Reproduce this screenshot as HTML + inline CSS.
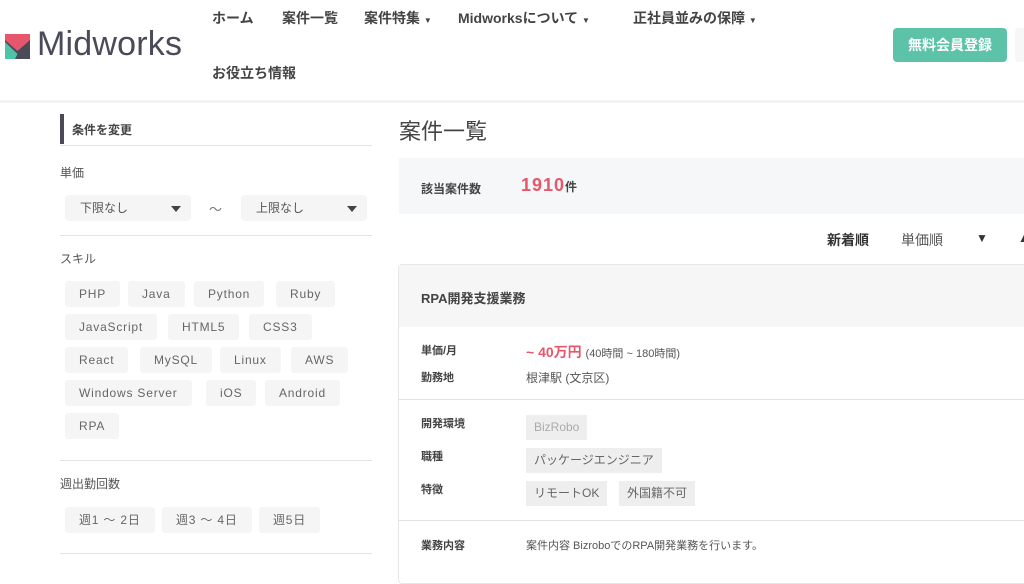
<!DOCTYPE html>
<html><head><meta charset="utf-8"><style>
*{margin:0;padding:0;box-sizing:border-box}
body{width:1024px;height:567px;overflow:hidden;background:#fff;font-family:"Liberation Sans","Noto Sans CJK JP",sans-serif;color:#333;position:relative}
.a{position:absolute;white-space:nowrap}
.nav{font-size:14px;font-weight:bold;color:#444}
.tag{position:absolute;background:#f5f5f5;border-radius:3px;font-size:12px;color:#666;height:26px;line-height:26px;padding:0 14px;letter-spacing:.8px}
.sel{position:absolute;background:#f5f5f5;border-radius:4px;height:26px;font-size:12px;color:#555;line-height:26px;padding-left:15px}
.sel:after{content:"";position:absolute;right:10px;top:11px;border:5px solid transparent;border-top:6px solid #444}
.lbl{font-size:12px;color:#555}
.hr{position:absolute;height:1px;background:#e3e3e3}
.ct{position:absolute;background:#eee;font-size:12px;color:#666;height:25px;line-height:25px;padding:0 8px}
</style></head><body>
<svg class="a" style="left:5px;top:34px" width="25" height="25" viewBox="0 0 25 25">
<rect x="0" y="5" width="25" height="20" fill="#4a4a58"/>
<polygon points="0,8 12.5,20 10,25 0,25" fill="#4cc4a5"/>
<polygon points="0,0 25,0 25,6 12.5,17 0,6" fill="#e8566b"/>
</svg>
<div class="a" style="left:37px;top:25px;font-size:34px;color:#4a4a58;letter-spacing:.2px">Midworks</div>
<div class="a nav" style="left:212px;top:8px">ホーム</div>
<div class="a nav" style="left:282px;top:8px">案件一覧</div>
<div class="a nav" style="left:364px;top:8px">案件特集 <span style="font-size:8px">▼</span></div>
<div class="a nav" style="left:458px;top:8px">Midworksについて <span style="font-size:8px">▼</span></div>
<div class="a nav" style="left:633px;top:8px">正社員並みの保障 <span style="font-size:8px">▼</span></div>
<div class="a nav" style="left:212px;top:63px">お役立ち情報</div>
<div class="a" style="left:893px;top:28px;width:114px;height:34px;background:#5cc3a8;border-radius:4px;color:#fff;font-size:14px;font-weight:bold;text-align:center;line-height:34px">無料会員登録</div>
<div class="a" style="left:1015px;top:28px;width:20px;height:34px;background:#f7f7f7;border-radius:4px"></div>
<div class="a" style="left:0;top:100px;width:1024px;height:3px;background:#f3f3f3"></div>

<div class="a" style="left:60px;top:114px;width:4px;height:30px;background:#4a4a58"></div>
<div class="a" style="left:72px;top:121px;font-size:12px;font-weight:bold;color:#444">条件を変更</div>
<div class="hr" style="left:60px;top:145px;width:312px"></div>
<div class="a lbl" style="left:60px;top:164px">単価</div>
<div class="sel" style="left:65px;top:195px;width:126px">下限なし</div>
<div class="a" style="left:209px;top:199px;font-size:13px;color:#777">～</div>
<div class="sel" style="left:241px;top:195px;width:126px">上限なし</div>
<div class="hr" style="left:60px;top:235px;width:312px"></div>
<div class="a lbl" style="left:60px;top:250px">スキル</div>
<div class="tag" style="left:65px;top:281px">PHP</div>
<div class="tag" style="left:128px;top:281px">Java</div>
<div class="tag" style="left:194px;top:281px">Python</div>
<div class="tag" style="left:276px;top:281px">Ruby</div>
<div class="tag" style="left:65px;top:314px">JavaScript</div>
<div class="tag" style="left:168px;top:314px">HTML5</div>
<div class="tag" style="left:249px;top:314px">CSS3</div>
<div class="tag" style="left:65px;top:347px">React</div>
<div class="tag" style="left:140px;top:347px">MySQL</div>
<div class="tag" style="left:220px;top:347px">Linux</div>
<div class="tag" style="left:291px;top:347px">AWS</div>
<div class="tag" style="left:65px;top:380px">Windows Server</div>
<div class="tag" style="left:206px;top:380px">iOS</div>
<div class="tag" style="left:265px;top:380px">Android</div>
<div class="tag" style="left:65px;top:413px">RPA</div>
<div class="hr" style="left:60px;top:460px;width:312px"></div>
<div class="a lbl" style="left:60px;top:475px">週出勤回数</div>
<div class="tag" style="left:65px;top:507px">週1 ～ 2日</div>
<div class="tag" style="left:162px;top:507px">週3 ～ 4日</div>
<div class="tag" style="left:259px;top:507px">週5日</div>
<div class="hr" style="left:60px;top:553px;width:312px"></div>

<div class="a" style="left:399px;top:114px;font-size:22px;color:#444">案件一覧</div>
<div class="a" style="left:399px;top:158px;width:625px;height:56px;background:#f6f7f9"></div>
<div class="a" style="left:421px;top:180px;font-size:12px;font-weight:bold;color:#444">該当案件数</div>
<div class="a" style="left:521px;top:175px;font-size:18px;font-weight:bold;color:#e8566b;letter-spacing:1px">1910<span style="font-size:12px;color:#444;letter-spacing:0">件</span></div>
<div class="a" style="left:827px;top:230px;font-size:14px;font-weight:bold;color:#333">新着順</div>
<div class="a" style="left:901px;top:230px;font-size:14px;color:#555">単価順</div>
<div class="a" style="left:976px;top:231px;font-size:12px;color:#333">▼</div>
<div class="a" style="left:1018px;top:231px;font-size:12px;color:#333">▲</div>

<div class="a" style="left:398px;top:264px;width:630px;height:320px;border:1px solid #e6e6e6;border-radius:4px"></div>
<div class="a" style="left:399px;top:265px;width:625px;height:62px;background:#f6f6f6"></div>
<div class="a" style="left:421px;top:288px;font-size:13px;font-weight:bold;color:#444">RPA開発支援業務</div>
<div class="a" style="left:421px;top:342px;font-size:11px;font-weight:bold;color:#444">単価/月</div>
<div class="a" style="left:526px;top:342px;font-size:14px;font-weight:bold;color:#e8566b">~ 40万円 <span style="font-size:11px;font-weight:normal;color:#555">(40時間 ~ 180時間)</span></div>
<div class="a" style="left:421px;top:369px;font-size:11px;font-weight:bold;color:#444">勤務地</div>
<div class="a" style="left:526px;top:369px;font-size:12px;color:#555">根津駅 (文京区)</div>
<div class="hr" style="left:399px;top:399px;width:625px"></div>
<div class="a" style="left:421px;top:415px;font-size:11px;font-weight:bold;color:#444">開発環境</div>
<div class="ct" style="left:526px;top:415px;color:#aaa">BizRobo</div>
<div class="a" style="left:421px;top:448px;font-size:11px;font-weight:bold;color:#444">職種</div>
<div class="ct" style="left:526px;top:448px">パッケージエンジニア</div>
<div class="a" style="left:421px;top:481px;font-size:11px;font-weight:bold;color:#444">特徴</div>
<div class="ct" style="left:526px;top:481px">リモートOK</div>
<div class="ct" style="left:619px;top:481px">外国籍不可</div>
<div class="hr" style="left:399px;top:520px;width:625px"></div>
<div class="a" style="left:421px;top:537px;font-size:11px;font-weight:bold;color:#444">業務内容</div>
<div class="a" style="left:526px;top:537px;font-size:11px;color:#555">案件内容 BizroboでのRPA開発業務を行います。</div>
</body></html>
